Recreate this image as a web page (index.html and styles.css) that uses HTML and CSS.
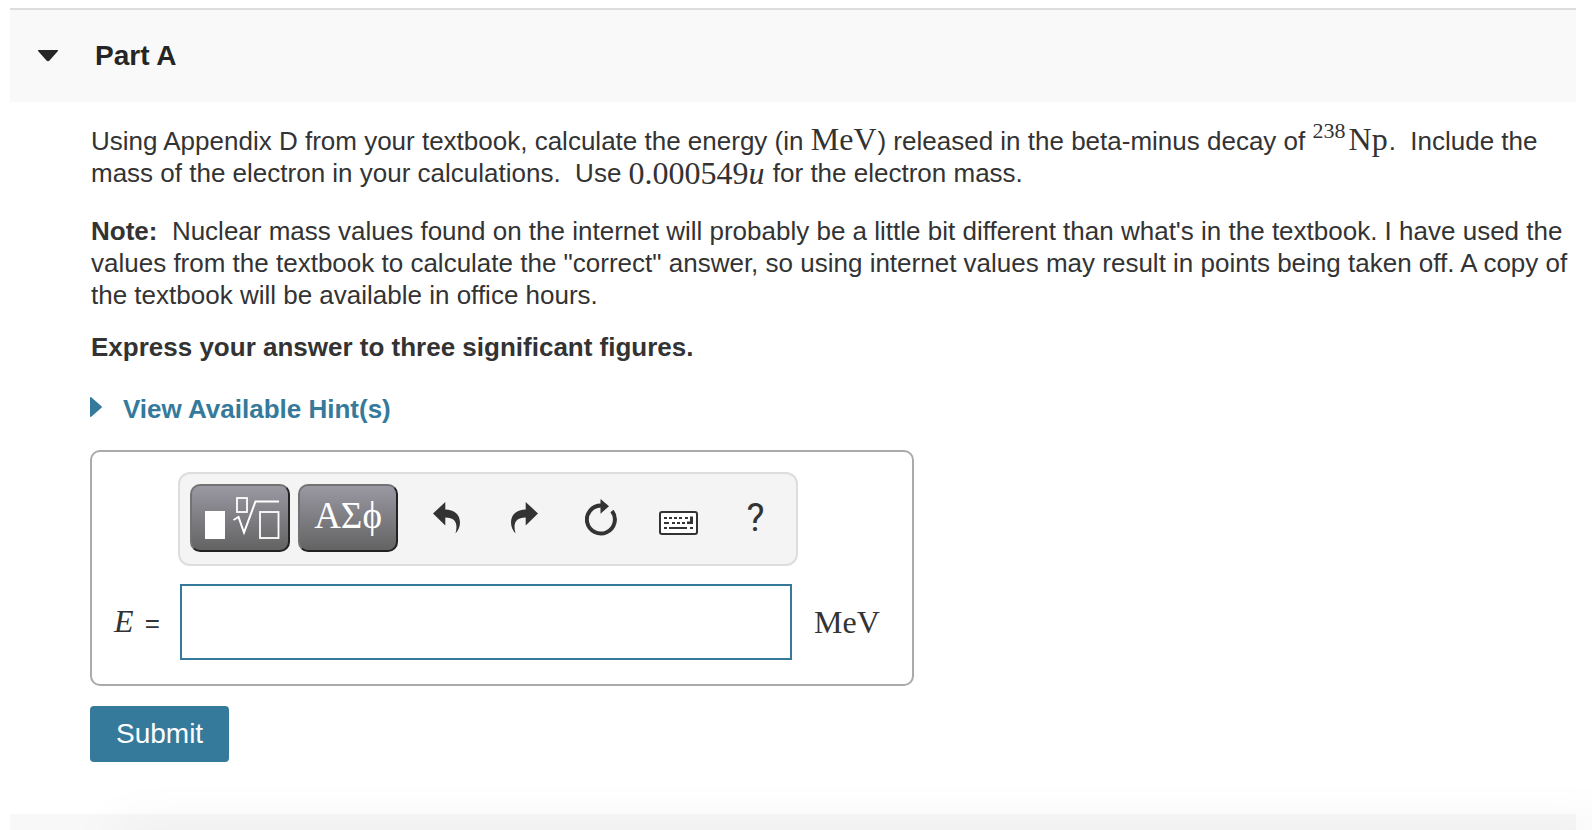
FILE: index.html
```html
<!DOCTYPE html>
<html lang="en">
<head>
  <meta charset="UTF-8"/>
  <meta name="viewport" content="width=device-width, initial-scale=1.0"/>
  <title>Part A</title>
  <link rel="stylesheet" href="styles.css">
</head>
<body>

<main class="page">
  <section class="part">
    <h2 class="part-header">
      <button class="part-toggle" type="button" aria-expanded="true">
        <svg class="caret" width="20" height="12" viewBox="0 0 20 12" aria-hidden="true">
          <path d="M1 0H19Q21 0 19.500 1.600L11.500 10.500Q10 12 8.500 10.500L.5 1.600Q-1 0 1 0Z"/>
        </svg>
        <span>Part A</span>
      </button>
    </h2>

    <div class="part-body">
      <p class="question">Using Appendix D from your textbook, calculate the energy (in <span class="math">MeV</span>) released in the beta-minus decay of <span class="math"><sup>238</sup>Np</span>.&nbsp; Include the mass of the electron in your calculations.&nbsp; Use <span class="math number">0.000549<i>u</i></span> for the electron mass.</p>
      <p class="note"><strong>Note:</strong>&nbsp; Nuclear mass values found on the internet will probably be a little bit different than what's in the textbook. I have used the values from the textbook to calculate the "correct" answer, so using internet values may result in points being taken off. A copy of the textbook will be available in office hours.</p>
      <p class="instructions">Express your answer to three significant figures.</p>

      <a class="hints" href="#hints">
        <svg width="12" height="20" viewBox="0 0 12 20" aria-hidden="true">
          <path d="M0 1Q0-.5 1.500.5L11.500 9.200Q12.300 10 11.500 10.800L1.500 19.500Q0 20.500 0 19Z"/>
        </svg>
        <span>View Available Hint(s)</span>
      </a>

      <form class="answer">
        <div class="answer-box">
          <div class="toolbar" role="toolbar" aria-label="Equation editor">
            <button class="palette" type="button" aria-label="Templates">
              <svg width="76" height="44" viewBox="0 0 76 44" aria-hidden="true">
                <rect x="1" y="15" width="20" height="28" fill="#fff"/>
                <g fill="none" stroke="#fff" stroke-width="1.800">
                  <rect x="33" y="2" width="10" height="14"/>
                  <path d="M29.500 24L34.500 21L40 36.500L51.500 5.500H75" stroke-width="2"/>
                  <rect x="56" y="16" width="18.500" height="26"/>
                </g>
              </svg>
            </button>
            <button class="palette greek" type="button" aria-label="Symbols">ΑΣϕ</button>
            <button class="tool" type="button" aria-label="Undo">
              <svg width="28" height="32" viewBox="0 0 28 32" aria-hidden="true">
                <path d="M0 11.500L12.300 0V7.500C21 7.500 27 12.500 27 20.500C27 25 25 29 22.500 31.500C25 22 23 15.500 12.300 15.500V23.500Z"/>
              </svg>
            </button>
            <button class="tool" type="button" aria-label="Redo">
              <svg width="28" height="32" viewBox="0 0 28 32" aria-hidden="true">
                <path d="M28 11.500L15.700 0V7.500C7 7.500 1 12.500 1 20.500C1 25 3 29 5.500 31.500C3 22 5 15.500 15.700 15.500V23.500Z"/>
              </svg>
            </button>
            <button class="tool" type="button" aria-label="Reset">
              <svg width="32" height="38" viewBox="0 0 32 38" aria-hidden="true">
                <path d="M27 12A14 14 0 1 1 16 6.500" fill="none" stroke="#333" stroke-width="4"/>
                <path d="M15.500 0L24 7.200L15.500 14.700Z"/>
              </svg>
            </button>
            <button class="tool keyboard" type="button" aria-label="Keyboard shortcuts">
              <svg width="39" height="24" viewBox="0 0 39 24" aria-hidden="true">
                <rect x="1" y="1" width="37" height="22" rx="2" fill="#fff" stroke="#333" stroke-width="2"/>
                <path d="M5 6h3v2h-3zM10 6h3v2h-3zM15 6h3v2h-3zM20 6h3v2h-3zM26 6h3v2h-3zM31 5.500h3v7.500h-6v-2.500h3z"/>
                <path d="M5 11h5v2h-5zM13 11h3v2h-3zM18 11h3v2h-3zM23 11h3v2h-3zM5 16h3v2h-3zM10 16h18v2h-18zM31 16h3v2h-3z"/>
              </svg>
            </button>
            <button class="tool help" type="button" aria-label="Help">?</button>
          </div>
          <label class="variable" for="answer"><i>E</i> =</label>
          <input class="answer-input" id="answer" type="text" autocomplete="off">
          <span class="unit">MeV</span>
        </div>
        <button class="submit" type="submit">Submit</button>
      </form>
    </div>
  </section>

  <div class="next-part"></div>
</main>
<div class="bottom-shadow"></div>

</body>
</html>
```
FILE: styles.css
```css
* {
  box-sizing: border-box;
}

body {
  margin: 0;
  background-color: #fff;
  color: #333;
  font-family: "Liberation Sans", Helvetica, Arial, sans-serif;
  font-size: 26px;
  line-height: 32px;
}

button {
  margin: 0;
  padding: 0;
  border: none;
  background: none;
  color: inherit;
  font: inherit;
  cursor: pointer;
}

svg {
  display: block;
  fill: currentColor;
}

.page {
  display: flex;
  flex-direction: column;
  min-height: 100vh;
  padding: 8px 16px 0 10px;
}

.part-header {
  margin: 0;
  border-top: 2px solid #ddd;
  background-color: #f9f9f9;
  color: #252525;
  font-size: 28px;
}

.part-toggle {
  display: flex;
  align-items: center;
  gap: 37px;
  width: 100%;
  padding: 30px 28px;
}

.part-body {
  padding: 23px 0 52px 80px;
}

p {
  margin: 0;
  padding-left: 1px;
}

.note {
  margin-top: 26px;
}

.instructions {
  margin-top: 20px;
  font-weight: bold;
}

.math {
  padding-right: 1px;
  font-family: "Liberation Serif", "Times New Roman", serif;
  font-size: 32px;
  line-height: 0;
}

.math sup {
  margin-right: 3px;
  font-size: 22px;
  line-height: 0;
}

.number {
  vertical-align: -2px;
}

.hints {
  display: inline-flex;
  align-items: center;
  gap: 21px;
  margin-top: 30px;
  color: #357a9b;
  font-weight: bold;
  text-decoration: none;
}

.hints svg {
  margin-bottom: 4px;
}

.answer {
  margin-top: 25px;
}

.answer-box {
  display: grid;
  grid-template-columns: auto minmax(0, 620px) auto;
  align-items: center;
  row-gap: 18px;
  column-gap: 16px;
  width: fit-content;
  max-width: 100%;
  padding: 20px 32px 24px 22px;
  border: 2px solid #aaa;
  border-radius: 10px;
}

.toolbar {
  display: flex;
  align-items: center;
  grid-column: 2;
  padding: 10px 2px 12px 10px;
  border: 2px solid #ddd;
  border-radius: 12px;
  background-color: #f4f4f4;
}

.palette {
  display: flex;
  align-items: center;
  justify-content: center;
  width: 100px;
  height: 68px;
  margin-right: 8px;
  padding-left: 4px;
  border: 2px solid;
  border-color: #737373 #222 #222 #737373;
  border-radius: 10px;
  background: linear-gradient(#9a98a2, #636363);
  color: #fff;
}

.greek {
  margin-right: 10px;
  padding: 0 0 4px;
  font-family: "Liberation Serif", serif;
  font-size: 37px;
}

.tool {
  display: flex;
  align-items: center;
  justify-content: center;
  flex: 1;
  height: 68px;
}

.keyboard {
  padding-top: 10px;
}

.help {
  font-family: Roboto, sans-serif;
  font-size: 38px;
}

.variable {
  grid-column: 1;
  min-width: 48px;
  white-space: nowrap;
}

.variable i,
.unit {
  font-family: "Liberation Serif", "Times New Roman", serif;
  font-size: 32px;
}

.variable i {
  margin-right: 4px;
}

.answer-input {
  height: 76px;
  margin: 0 6px 0 2px;
  padding: 0 12px;
  border: 2px solid #357a9b;
  background-color: #fff;
  color: inherit;
  font: inherit;
  outline: none;
}

.submit {
  margin-top: 20px;
  padding: 12px 26px;
  border-radius: 4px;
  background-color: #357a9b;
  color: #fff;
  font-size: 28px;
}

.next-part {
  flex: 1;
  min-height: 16px;
  background-color: #f8f8f8;
}

/* soft shade rising from the bottom edge of the window */
.bottom-shadow {
  position: fixed;
  right: 0;
  bottom: 0;
  left: 140px;
  height: 0;
  box-shadow: 0 24px 60px 24px rgba(0, 0, 0, 0.06);
  pointer-events: none;
}
```
